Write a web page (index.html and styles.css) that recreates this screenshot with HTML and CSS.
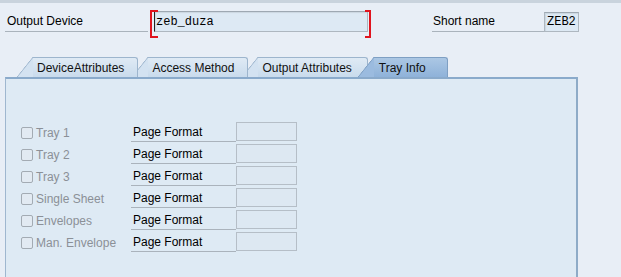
FILE: index.html
```html
<!DOCTYPE html>
<html lang="en">
<head>
    <meta charset="UTF-8">
    <title>Output Device - Tray Info</title>
    <link rel="stylesheet" href="styles.css">
</head>
<body>
    <div class="topbar"></div>

    <div class="header">
        <div class="field-label">Output Device</div>
        <div class="device-field">
            <div class="input mono wide">zeb_duza</div>
        </div>
        <div class="field-label short">Short name</div>
        <div class="input mono small">ZEB2</div>
    </div>

    <div class="tabs">
        <div class="tab t1">DeviceAttributes</div>
        <div class="tab t2">Access Method</div>
        <div class="tab t3">Output Attributes</div>
        <div class="tab active">Tray Info</div>
    </div>

    <div class="panel">
        <div class="tray-list">
            <div class="tray-row">
                <div class="check"><span class="box"></span>Tray 1</div>
                <div class="pf-label">Page Format</div>
                <div class="pf-input"></div>
            </div>
            <div class="tray-row">
                <div class="check"><span class="box"></span>Tray 2</div>
                <div class="pf-label">Page Format</div>
                <div class="pf-input"></div>
            </div>
            <div class="tray-row">
                <div class="check"><span class="box"></span>Tray 3</div>
                <div class="pf-label">Page Format</div>
                <div class="pf-input"></div>
            </div>
            <div class="tray-row">
                <div class="check"><span class="box"></span>Single Sheet</div>
                <div class="pf-label">Page Format</div>
                <div class="pf-input"></div>
            </div>
            <div class="tray-row">
                <div class="check"><span class="box"></span>Envelopes</div>
                <div class="pf-label">Page Format</div>
                <div class="pf-input"></div>
            </div>
            <div class="tray-row">
                <div class="check"><span class="box"></span>Man. Envelope</div>
                <div class="pf-label">Page Format</div>
                <div class="pf-input"></div>
            </div>
        </div>
    </div>
</body>
</html>
```

FILE: styles.css
```css
* {
    box-sizing: border-box;
}
body {
    margin: 0;
    width: 621px;
    height: 277px;
    overflow: hidden;
    background-color: #e8eef6;
    font-family: 'Liberation Sans', Arial, sans-serif;
    font-size: 12px;
    color: #000;
}
.topbar {
    height: 3px;
    background-color: #c9d3dd;
}

/* header fields */
.header {
    display: flex;
    align-items: flex-start;
    padding: 8px 0 0 5px;
}
.field-label {
    width: 143px;
    height: 21px;
    line-height: 21px;
    padding-left: 2px;
    border-bottom: 1px solid #aab3bc;
}
.field-label.short {
    width: 113px;
    margin-left: 61px;
    padding-left: 1px;
}
.device-field {
    position: relative;
    margin-left: 2px;
    padding: 0 3px 0 4px;
}
.device-field::before,
.device-field::after {
    content: '';
    position: absolute;
    top: -1px;
    height: 24px;
    width: 6px;
    border: 2px solid #e0141e;
}
.device-field::before {
    left: 0;
    border-right: none;
}
.device-field::after {
    right: 0;
    border-left: none;
    width: 4px;
}
.input {
    height: 21px;
    line-height: 20px;
    border: 1px solid #aeb7c0;
    border-top-color: #9ea8b2;
    background-color: #dde9f4;
    box-shadow: inset 1px 1px 1px rgba(0, 0, 0, 0.08);
    padding-left: 1px;
}
.mono {
    font-family: 'Liberation Mono', 'Courier New', monospace;
    font-size: 12px;
}
.input.wide {
    width: 214px;
    border-left: 1px solid #222;
}
.input.small {
    width: 35px;
    height: 20px;
    line-height: 19px;
    margin-top: 1px;
    margin-left: -1px;
    padding-left: 2px;
}

/* tab strip */
.tabs {
    display: flex;
    height: 20px;
    margin-top: 25px;
    padding-left: 33px;
}
.tab {
    position: relative;
    height: 20px;
    line-height: 20px;
    padding: 0 13px 0 4px;
    margin-left: 10px;
    background: linear-gradient(#dfeaf5, #c9dbec);
    border-top: 1px solid #9db5cd;
    border-right: 1px solid #9db5cd;
    border-radius: 0 3px 0 0;
    color: #111;
}
.tab::before {
    content: '';
    position: absolute;
    top: -1px;
    bottom: 0;
    left: -16px;
    width: 16px;
    background: linear-gradient(to top left, #d3e2f1 calc(50% - 1px), #9db5cd 50%, transparent calc(50% + 0.5px));
}
.tab.t1 {
    margin-left: 0;
    z-index: 4;
}
.tab.t2 {
    z-index: 3;
}
.tab.t3 {
    z-index: 2;
    padding-right: 15px;
}
.tab.active {
    margin-left: 6px;
    padding-left: 5px;
    padding-right: 21px;
    z-index: 5;
    background: linear-gradient(#abc7e4, #8fb2d9);
    border-color: #7e9fc3;
}
.tab.active::before {
    background: linear-gradient(to top left, #9bbbdf calc(50% - 1px), #7e9fc3 50%, transparent calc(50% + 0.5px));
}

/* panel */
.panel {
    height: 200px;
    margin: 0 43px 0 5px;
    background-color: #deeaf4;
    border-top: 2px solid #8aaacb;
    border-left: 1px solid #9fb7cf;
    border-right: 2px solid #8eabc7;
    padding: 43px 0 0 15px;
}
.tray-list {
    display: flex;
    flex-direction: column;
    gap: 3px;
}
.tray-row {
    display: flex;
    height: 19px;
}
.check {
    width: 110px;
    display: flex;
    align-items: center;
    gap: 3px;
    padding-top: 3px;
    color: #8b9097;
}
.box {
    width: 12px;
    height: 12px;
    border: 1px solid #a3abb3;
    border-radius: 2px;
    background-color: #e2eaf2;
}
.pf-label {
    width: 105px;
    height: 20px;
    line-height: 21px;
    padding-left: 2px;
    border-bottom: 1px solid #aab3bc;
}
.pf-input {
    width: 61px;
    height: 19px;
    border: 1px solid #b5bec7;
    background-color: #dde8f2;
}
```
